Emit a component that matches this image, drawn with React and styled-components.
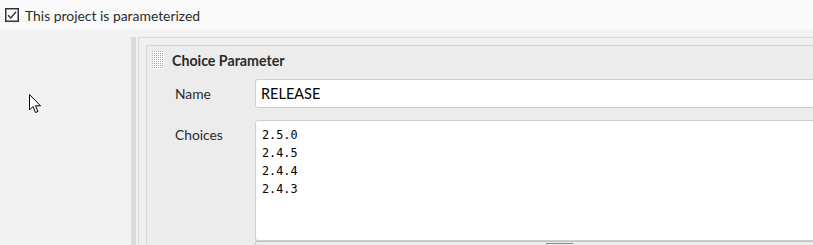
import React from "react";
import styled, { createGlobalStyle } from "styled-components";

const Global = createGlobalStyle`
  html, body { margin: 0; padding: 0; background: #f2f2f2; overflow: hidden; }
  body { font-family: Lato, "Noto Sans", sans-serif; color: #333; }
  * { box-sizing: border-box; }
`;

const Page = styled.div`
  width: 813px;
  height: 245px;
  overflow: hidden;
  display: flex;
  flex-direction: column;
`;

const TopBar = styled.div`
  height: 30px;
  flex: none;
  background: #f9f9f9;
  display: flex;
  align-items: center;
  padding-left: 5px;
  gap: 6px;
  font-size: 13.9px;
  color: #2b2b2b;
`;

const Main = styled.div`
  position: relative;
  flex: 1;
  display: flex;
  padding-top: 7px;
  background: #f2f2f2;
  overflow: hidden;
`;

const Gutter = styled.div`
  width: 131px;
  flex: none;
`;

const Rail = styled.div`
  width: 5px;
  flex: none;
  background: #dadada;
  margin-right: 2px;
`;

const Outer = styled.div`
  flex: none;
  width: 900px;
  border-left: 1px solid #d9d9d9;
  border-top: 1px solid #d9d9d9;
  background: #f0f0f0;
  padding: 7px 0 0 7px;
`;

const Panel = styled.div`
  border: 1px solid #d6d6d6;
  border-right: none;
  border-bottom: none;
  background: #ececec;
  height: 100%;
`;

const PanelHeader = styled.div`
  display: flex;
  align-items: center;
  padding: 5px 0 0 5px;
  height: 23px;
`;

const Title = styled.div`
  margin-left: 8px;
  font-weight: 700;
  font-size: 14.2px;
  color: #2b2b2b;
`;

const Row = styled.div`
  display: flex;
  align-items: flex-start;
  padding-left: 28px;
  margin-top: ${(p) => p.$gap}px;
`;

const Label = styled.div`
  width: 80px;
  flex: none;
  line-height: 29px;
  font-size: 13.8px;
  color: #2b2b2b;
`;

const TextInput = styled.div`
  width: 620px;
  height: 29px;
  background: #fff;
  border: 1px solid #cfcfcf;
  border-radius: 3px;
  padding-left: 5px;
  display: flex;
  align-items: center;
  font-size: 14.5px;
  color: #000;
`;

const Field = styled.div`
  width: 620px;
  display: flex;
  flex-direction: column;
`;

const TextArea = styled.div`
  height: 121px;
  background: #fff;
  border: 1px solid #cfcfcf;
  border-radius: 3px;
  padding: 5px 0 0 6px;
  font-family: "DejaVu Sans Mono", "Liberation Mono", monospace;
  font-size: 11.8px;
  line-height: 18px;
  color: #000;
  white-space: pre;
`;

const Grip = styled.div`
  height: 12px;
  border-left: 1px solid #cfcfcf;
  border-top: 1px solid #c4c4c4;
  background: #ececec;
  display: flex;
  justify-content: center;
  padding-top: 1px;
`;

const GripLines = styled.div`
  width: 27px;
  height: 4px;
  border-top: 1px solid #8a8a8a;
  border-bottom: 1px solid #8a8a8a;
  transform: translateX(-6px);
`;

const Cursor = styled.svg`
  position: absolute;
  left: 29px;
  top: 64px;
`;

const CheckBox = () => (
  <svg width="14" height="14" viewBox="0 0 14 14">
    <rect x="0.75" y="0.75" width="12.5" height="12.5" fill="#fff" stroke="#333" strokeWidth="1.5" />
    <path d="M3 7.2 L5.8 10 L11 3.8" fill="none" stroke="#333" strokeWidth="1.4" />
  </svg>
);

const Handle = () => {
  const dots = [];
  for (let y = 0; y < 9; y++) {
    for (let x = 0; x < 6; x++) {
      dots.push(<rect key={`${x}-${y}`} x={x * 2} y={y * 2} width="1" height="1" fill="#a8a8a8" />);
    }
  }
  return (
    <svg width="12" height="18" viewBox="0 0 12 18" shapeRendering="crispEdges">
      <rect width="12" height="18" fill="#fff" />
      {dots}
    </svg>
  );
};

export default function App() {
  return (
    <>
      <Global />
      <Page>
        <TopBar>
          <CheckBox />
          <span>This project is parameterized</span>
        </TopBar>
        <Main>
          <Gutter />
          <Rail />
          <Outer>
            <Panel>
              <PanelHeader>
                <Handle />
                <Title>Choice Parameter</Title>
              </PanelHeader>
              <Row $gap={10}>
                <Label>Name</Label>
                <TextInput>RELEASE</TextInput>
              </Row>
              <Row $gap={12}>
                <Label>Choices</Label>
                <Field>
                  <TextArea>{"2.5.0\n2.4.5\n2.4.4\n2.4.3"}</TextArea>
                  <Grip>
                    <GripLines />
                  </Grip>
                </Field>
              </Row>
            </Panel>
          </Outer>
          <Cursor width="13" height="20" viewBox="0 0 13 20">
            <path d="M0.5 0.5 L0.5 16 L4 12.5 L6.5 18.5 L9 17.5 L6.5 11.8 L11.5 11.8 Z" fill="#fff" stroke="#000" strokeWidth="1" />
          </Cursor>
        </Main>
      </Page>
    </>
  );
}
